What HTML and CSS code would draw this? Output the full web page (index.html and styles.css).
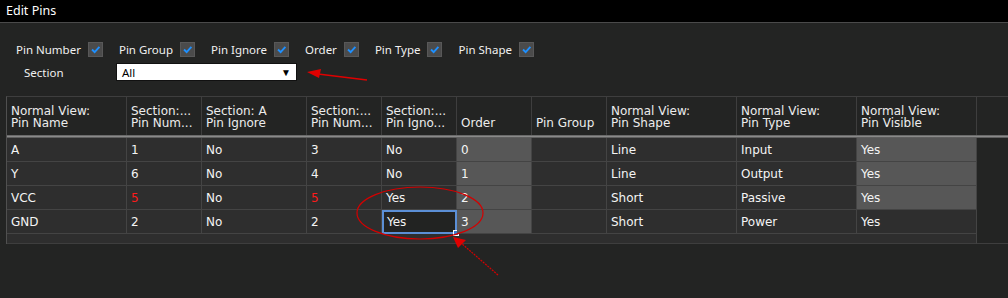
FILE: index.html
```html
<!DOCTYPE html>
<html lang="en">
<head>
    <meta charset="UTF-8">
    <title>Edit Pins</title>
    <link rel="stylesheet" href="styles.css">
</head>
<body>
    <div class="titlebar">Edit Pins</div>

    <div class="options">
        <div class="check-row">
            <label class="opt">Pin Number <span class="box"><svg viewBox="0 0 15 15"><polyline points="3.5,7.5 6.5,10.5 12,4.5"/></svg></span></label>
            <label class="opt">Pin Group <span class="box"><svg viewBox="0 0 15 15"><polyline points="3.5,7.5 6.5,10.5 12,4.5"/></svg></span></label>
            <label class="opt">Pin Ignore <span class="box"><svg viewBox="0 0 15 15"><polyline points="3.5,7.5 6.5,10.5 12,4.5"/></svg></span></label>
            <label class="opt">Order <span class="box"><svg viewBox="0 0 15 15"><polyline points="3.5,7.5 6.5,10.5 12,4.5"/></svg></span></label>
            <label class="opt">Pin Type <span class="box"><svg viewBox="0 0 15 15"><polyline points="3.5,7.5 6.5,10.5 12,4.5"/></svg></span></label>
            <label class="opt">Pin Shape <span class="box"><svg viewBox="0 0 15 15"><polyline points="3.5,7.5 6.5,10.5 12,4.5"/></svg></span></label>
        </div>
        <div class="section-row">
            <span class="section-label">Section</span>
            <div class="dropdown"><span>All</span><span class="caret">&#9660;</span></div>
        </div>
    </div>

    <div class="grid">
        <div class="hd">Normal View:<br>Pin Name</div>
        <div class="hd">Section:...<br>Pin Num...</div>
        <div class="hd">Section: A<br>Pin Ignore</div>
        <div class="hd">Section:...<br>Pin Num...</div>
        <div class="hd">Section:...<br>Pin Igno...</div>
        <div class="hd">Order</div>
        <div class="hd">Pin Group</div>
        <div class="hd">Normal View:<br>Pin Shape</div>
        <div class="hd">Normal View:<br>Pin Type</div>
        <div class="hd">Normal View:<br>Pin Visible</div>
        <div class="hd filler"></div>
        <div class="sep"></div>

        <div class="c">A</div><div class="c">1</div><div class="c">No</div><div class="c">3</div><div class="c">No</div>
        <div class="c ro">0</div><div class="c"></div><div class="c">Line</div><div class="c">Input</div><div class="c ro">Yes</div><div class="blank"></div>

        <div class="c">Y</div><div class="c">6</div><div class="c">No</div><div class="c">4</div><div class="c">No</div>
        <div class="c ro">1</div><div class="c"></div><div class="c">Line</div><div class="c">Output</div><div class="c ro">Yes</div><div class="blank"></div>

        <div class="c">VCC</div><div class="c err">5</div><div class="c">No</div><div class="c err">5</div><div class="c">Yes</div>
        <div class="c ro">2</div><div class="c"></div><div class="c">Short</div><div class="c">Passive</div><div class="c ro">Yes</div><div class="blank"></div>

        <div class="c">GND</div><div class="c">2</div><div class="c">No</div><div class="c">2</div><div class="c selected">Yes<span class="handle"></span></div>
        <div class="c ro">3</div><div class="c"></div><div class="c">Short</div><div class="c">Power</div><div class="c">Yes</div><div class="blank"></div>

        <div class="scroll"></div><div class="blank scroll-end"></div>
    </div>

    <!-- annotation marks drawn over the screenshot -->
    <svg class="marks" width="1008" height="298" viewBox="0 0 1008 298">
        <line x1="367" y1="80" x2="318" y2="74" stroke="#e00000" stroke-width="1.5"/>
        <polygon points="307,72 321,69 319,78" fill="#e00000"/>
        <ellipse cx="420" cy="213" rx="63" ry="26" fill="none" stroke="#d40000" stroke-width="1.2"/>
        <line x1="498" y1="275" x2="461" y2="243" stroke="#d40000" stroke-width="1.2" stroke-dasharray="2 1"/>
        <polygon points="453,237 466,240 458,248" fill="#e00000"/>
    </svg>
</body>
</html>
```

FILE: styles.css
```css
* {
    margin: 0;
    padding: 0;
    box-sizing: border-box;
}
body {
    width: 1008px;
    height: 298px;
    overflow: hidden;
    background: #232423;
    color: #fff;
    font-family: "Noto Sans", sans-serif;
    position: relative;
}
.titlebar {
    height: 23px;
    background: #000;
    border-bottom: 1px solid #4a4a4a;
    padding-left: 6px;
    font-size: 12.5px;
    line-height: 21px;
    color: #fff;
}
.options {
    padding-top: 19px;
}
.check-row {
    display: flex;
    align-items: center;
    gap: 16px;
    padding-left: 16px;
    height: 15px;
}
.opt {
    display: flex;
    align-items: center;
    gap: 7px;
    font-size: 11.5px;
    color: #f0f0f0;
}
.box {
    width: 15px;
    height: 15px;
    background: #4b4b4b;
    border: 1px solid #585858;
    display: block;
}
.box svg {
    display: block;
    width: 13px;
    height: 13px;
}
.box polyline {
    fill: none;
    stroke: #1e90ff;
    stroke-width: 2.2;
}
.section-row {
    display: flex;
    align-items: center;
    margin-top: 6px;
    height: 18px;
    padding-left: 24px;
}
.section-label {
    width: 92px;
    font-size: 11.5px;
    color: #f0f0f0;
}
.dropdown {
    width: 181px;
    height: 18px;
    background: #fff;
    border: 1px solid #111;
    color: #000;
    font-size: 11.5px;
    display: flex;
    align-items: center;
    justify-content: space-between;
    padding: 0 5px 0 5px;
}
.caret {
    font-size: 10px;
}

/* pins grid */
.grid {
    margin: 15px 0 0 6px;
    display: grid;
    grid-template-columns: 120px 75px 105px 75px 75px 75px 75px 130px 120px 120px 1fr;
    border-top: 1px solid #3e3e3e;
    border-left: 1px solid #505050;
    font-family: "DejaVu Sans", sans-serif;
    font-size: 12px;
}
.hd {
    height: 38px;
    background: #232423;
    border-right: 1px solid #3e3e3e;
    color: #ececec;
    line-height: 12px;
    padding: 0 4px 6px 4px;
    display: flex;
    align-items: flex-end;
    white-space: nowrap;
}
.hd.filler {
    border-right: none;
}
.sep {
    grid-column: 1 / -1;
    height: 3px;
    background: linear-gradient(#5a5a5a, #8a8a8a, #4a4a4a);
}
.c {
    height: 24px;
    background: #2e2e2e;
    border-right: 1px solid #444;
    border-bottom: 1px solid #444;
    padding: 0 4px;
    display: flex;
    align-items: center;
    color: #f4f4f4;
    white-space: nowrap;
    position: relative;
}
.c.ro {
    background: #575757;
}
.c.err {
    color: #ff1a1a;
}
.c.selected {
    background: #222322;
    border: 2px solid #5b8fd6;
    padding-left: 3px;
}
.handle {
    position: absolute;
    right: -4px;
    bottom: -4px;
    width: 6px;
    height: 6px;
    background: #3d7ad0;
    border: 1px solid #fff;
}
.blank {
    background: #232423;
}
.scroll {
    grid-column: 1 / 11;
    height: 10px;
    background: #2e2e2e;
    border-right: 1px solid #444;
    border-bottom: 1px solid #3e3e3e;
}
.scroll-end {
    border-bottom: 1px solid #3e3e3e;
}
.marks {
    position: absolute;
    left: 0;
    top: 0;
    pointer-events: none;
}
```
